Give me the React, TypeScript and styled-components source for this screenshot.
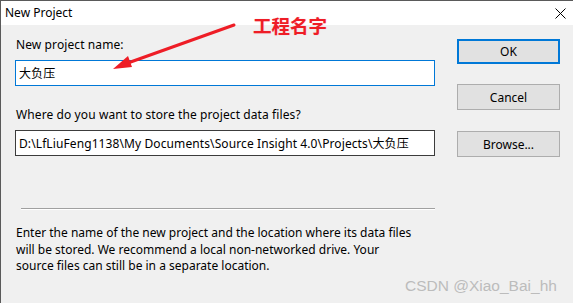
import * as React from 'react';
import styled, {createGlobalStyle} from 'styled-components';

const GlobalStyle = createGlobalStyle`
  html, body {
    margin: 0;
    padding: 0;
    background: #f0f0f0;
  }
  body {
    font-family: 'Noto Sans', 'Noto Sans CJK SC', sans-serif;
    font-size: 12px;
    color: #000;
  }
`;

const Frame = styled.div`
  position: relative;
  width: 573px;
  height: 303px;
  box-sizing: border-box;
  border-left: 1px solid #5a5a5a;
  border-top: 1px solid #5a5a5a;
  background: #f0f0f0;
  overflow: hidden;
`;

const TitleBar = styled.div`
  height: 24px;
  background: #fff;
  display: flex;
  align-items: center;
  justify-content: space-between;
  padding: 0 7px 0 4px;
`;

const Title = styled.span`
  font-size: 12px;
  line-height: 16px;
`;

const Body = styled.div`
  display: grid;
  grid-template-columns: 420px 103px;
  column-gap: 22px;
  padding: 12px 0 0 14px;
`;

const LeftColumn = styled.div`
  display: flex;
  flex-direction: column;
`;

const RightColumn = styled.div`
  display: flex;
  flex-direction: column;
  padding-top: 2px;
`;

const Label = styled.label<{$top?: number}>`
  display: block;
  line-height: 16px;
  height: 16px;
  margin-top: ${p => p.$top ?? 0}px;
  margin-bottom: 7px;
  padding-left: 1px;
  letter-spacing: 0.1px;
`;

const Field = styled.div<{$focused?: boolean}>`
  height: 26px;
  box-sizing: border-box;
  background: #fff;
  border: 1px solid ${p => (p.$focused ? '#0078d7' : '#3c3c3c')};
  display: flex;
  align-items: center;
  padding-left: 3px;
  white-space: nowrap;
  overflow: hidden;
  letter-spacing: 0.1px;
`;

const Separator = styled.div`
  margin: 52px 0 0 6px;
  height: 1px;
  background: #a0a0a0;
  box-shadow: 0 1px 0 #fff;
`;

const Description = styled.p`
  margin: 16px 0 0 1px;
  line-height: 16.5px;
`;

const Button = styled.div<{$default?: boolean; $top?: number}>`
  height: ${p => (p.$default ? 25 : 26)}px;
  margin-top: ${p => p.$top ?? 0}px;
  box-sizing: border-box;
  background: #e1e1e1;
  border: ${p => (p.$default ? '2px solid #0078d7' : '1px solid #adadad')};
  display: flex;
  align-items: center;
  justify-content: center;
`;

const Annotation = styled.span`
  position: absolute;
  left: 252px;
  top: 11px;
  font-family: 'Noto Sans CJK SC', sans-serif;
  font-weight: 700;
  font-size: 18.5px;
  color: #ee1d26;
  text-shadow: 0 0 1px rgba(255, 120, 150, 0.6);
`;

const ArrowLayer = styled.svg`
  position: absolute;
  left: 0;
  top: 0;
  pointer-events: none;
`;

const Watermark = styled.span`
  position: absolute;
  left: 404px;
  top: 276px;
  font-family: 'Liberation Sans', Arial, sans-serif;
  font-size: 15.5px;
  color: #bcbcbc;
`;

const CloseIcon = () => (
  <svg width="11" height="11" viewBox="0 0 11 11">
    <path d="M0.5 0.5 L10.5 10.5 M10.5 0.5 L0.5 10.5" stroke="#000" strokeWidth="1" fill="none" />
  </svg>
);

export default function App() {
  return (
    <>
      <GlobalStyle />
      <Frame>
        <TitleBar>
          <Title>New Project</Title>
          <CloseIcon />
        </TitleBar>
        <Body>
          <LeftColumn>
            <Label>New project name:</Label>
            <Field $focused>大负压</Field>
            <Label $top={21}>Where do you want to store the project data files?</Label>
            <Field>D:\LfLiuFeng1138\My Documents\Source Insight 4.0\Projects\大负压</Field>
            <Separator />
            <Description>
              Enter the name of the new project and the location where its data files
              <br />
              will be stored. We recommend a local non-networked drive. Your
              <br />
              source files can still be in a separate location.
            </Description>
          </LeftColumn>
          <RightColumn>
            <Button $default>OK</Button>
            <Button $top={20}>Cancel</Button>
            <Button $top={21}>Browse...</Button>
          </RightColumn>
        </Body>
        <ArrowLayer width="573" height="303" viewBox="0 0 573 303">
          <line x1="233" y1="24" x2="124" y2="63" stroke="#ee1d26" strokeWidth="3" strokeLinecap="round" />
          <polygon points="112,68 127,55 131,66" fill="#ee1d26" />
        </ArrowLayer>
        <Annotation>工程名字</Annotation>
        <Watermark>CSDN @Xiao_Bai_hh</Watermark>
      </Frame>
    </>
  );
}
